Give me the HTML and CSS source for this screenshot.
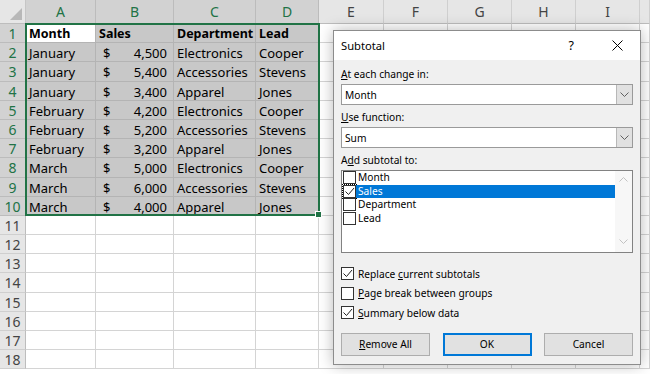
FILE: index.html
```html
<!DOCTYPE html>
<html lang="en">
<head>
    <meta charset="UTF-8">
    <title>Subtotal</title>
    <link rel="stylesheet" href="styles.css">
</head>
<body>
    <div class="sheet" id="sheet">
        <div class="sel"><span class="handle"></span></div>
    </div>

    <div class="dialog">
        <div class="dlg-title">
            <span>Subtotal</span>
            <span class="help">?</span>
            <svg class="close" width="11" height="11" viewBox="0 0 11 11"><path d="M0.5 0.5L10.5 10.5M10.5 0.5L0.5 10.5" stroke="#000" stroke-width="1"/></svg>
        </div>
        <div class="dlg-body">
            <div class="lbl"><u>A</u>t each change in:</div>
            <div class="combo">
                <span>Month</span>
                <span class="combo-btn"><svg width="9" height="5" viewBox="0 0 9 5"><path d="M0.5 0.5L4.5 4.5L8.5 0.5" fill="none" stroke="#606060"/></svg></span>
            </div>
            <div class="lbl"><u>U</u>se function:</div>
            <div class="combo">
                <span>Sum</span>
                <span class="combo-btn"><svg width="9" height="5" viewBox="0 0 9 5"><path d="M0.5 0.5L4.5 4.5L8.5 0.5" fill="none" stroke="#606060"/></svg></span>
            </div>
            <div class="lbl">A<u>d</u>d subtotal to:</div>
            <div class="listbox">
                <div class="items">
                    <div class="item"><span class="box"></span><span class="txt">Month</span></div>
                    <div class="item active"><span class="box focus"><svg width="11" height="11" viewBox="0 0 11 11"><path d="M1.5 5.5L4.5 8.5L10 2" fill="none" stroke="#222"/></svg></span><span class="txt">Sales</span></div>
                    <div class="item"><span class="box"></span><span class="txt">Department</span></div>
                    <div class="item"><span class="box"></span><span class="txt">Lead</span></div>
                </div>
                <div class="scroll">
                    <svg width="9" height="5" viewBox="0 0 9 5"><path d="M0.5 4.5L4.5 0.5L8.5 4.5" fill="none" stroke="#c2c2c2"/></svg>
                    <svg width="9" height="5" viewBox="0 0 9 5"><path d="M0.5 0.5L4.5 4.5L8.5 0.5" fill="none" stroke="#c2c2c2"/></svg>
                </div>
            </div>
            <div class="opts">
                <div class="opt"><span class="box"><svg width="11" height="11" viewBox="0 0 11 11"><path d="M1.5 5.5L4.5 8.5L10 2" fill="none" stroke="#222"/></svg></span><span>Replace <u>c</u>urrent subtotals</span></div>
                <div class="opt"><span class="box"></span><span><u>P</u>age break between groups</span></div>
                <div class="opt"><span class="box"><svg width="11" height="11" viewBox="0 0 11 11"><path d="M1.5 5.5L4.5 8.5L10 2" fill="none" stroke="#222"/></svg></span><span><u>S</u>ummary below data</span></div>
            </div>
            <div class="buttons">
                <button><u>R</u>emove All</button>
                <button class="default">OK</button>
                <button>Cancel</button>
            </div>
        </div>
    </div>

    <script>
        const sheet = document.getElementById('sheet');
        const letters = ['A', 'B', 'C', 'D', 'E', 'F', 'G', 'H', 'I', ''];
        const data = [
            ['Month', 'Sales', 'Department', 'Lead'],
            ['January', 4500, 'Electronics', 'Cooper'],
            ['January', 5400, 'Accessories', 'Stevens'],
            ['January', 3400, 'Apparel', 'Jones'],
            ['February', 4200, 'Electronics', 'Cooper'],
            ['February', 5200, 'Accessories', 'Stevens'],
            ['February', 3200, 'Apparel', 'Jones'],
            ['March', 5000, 'Electronics', 'Cooper'],
            ['March', 6000, 'Accessories', 'Stevens'],
            ['March', 4000, 'Apparel', 'Jones']
        ];

        function addCell(row, col, cls, html) {
            const el = document.createElement('div');
            el.className = cls;
            el.innerHTML = html || '';
            el.style.gridArea = (row + 1) + ' / ' + (col + 1);
            sheet.appendChild(el);
            return el;
        }

        // column headers
        addCell(0, 0, 'corner');
        letters.forEach((l, i) => {
            addCell(0, i + 1, 'colhead' + (i < 4 ? ' on' : ''), l);
        });

        // rows
        for (let r = 1; r <= 18; r++) {
            const inSel = r <= 10;
            addCell(r, 0, 'rowhead' + (inSel ? ' on' : ''), r);
            for (let c = 1; c <= 10; c++) {
                let cls = 'cell';
                let html = '';
                if (inSel && c <= 4) {
                    cls += (r === 1 && c === 1) ? ' active' : ' picked';
                    const v = data[r - 1][c - 1];
                    if (r === 1) {
                        cls += ' bold';
                        html = v;
                    } else if (c === 2) {
                        cls += ' money';
                        html = '<span>$</span><span>' + v.toLocaleString('en-US') + '</span>';
                    } else {
                        html = v;
                    }
                }
                addCell(r, c, cls, html);
            }
        }
    </script>
</body>
</html>
```

FILE: styles.css
```css
body {
    margin: 0;
    width: 650px;
    height: 374px;
    overflow: hidden;
    background: #fff;
    font-family: 'Noto Sans', sans-serif;
    position: relative;
}

/* ---- worksheet ---- */
.sheet {
    display: grid;
    grid-template-columns: 26px 70px 78px 82px 63px 65px 64px 64px 64px 64px 1fr;
    grid-template-rows: 24px repeat(18, 19.2px);
    font-size: 13px;
    color: #000;
}
.corner {
    background: #e6e6e6;
    border-right: 1px solid #c6c6c6;
    border-bottom: 1px solid #bdbdbd;
    position: relative;
}
.corner::after {
    content: '';
    position: absolute;
    right: 3px;
    bottom: 3px;
    border-left: 12px solid transparent;
    border-bottom: 12px solid #b8b8b8;
}
.colhead {
    background: #e6e6e6;
    border-right: 1px solid #cfcfcf;
    border-bottom: 1px solid #bdbdbd;
    text-align: center;
    line-height: 23px;
    font-size: 14px;
    color: #444;
}
.colhead.on {
    background: #d2d2d2;
    color: #217346;
    border-right-color: #bcbcbc;
}
.rowhead {
    background: #e6e6e6;
    border-right: 1px solid #bdbdbd;
    border-bottom: 1px solid #cfcfcf;
    text-align: center;
    font-size: 14px;
    line-height: 19px;
    color: #444;
}
.rowhead.on {
    background: #d2d2d2;
    color: #217346;
    border-bottom-color: #bcbcbc;
}
.cell {
    border-right: 1px solid #d4d4d4;
    border-bottom: 1px solid #d4d4d4;
    padding: 1px 3px 0;
    line-height: 18px;
    white-space: nowrap;
    overflow: hidden;
}
.cell.picked {
    background: #c8c8c8;
    border-color: #b4b4b4;
}
.cell.active {
    background: #fff;
    border-color: #b4b4b4;
}
.bold {
    font-weight: bold;
    font-size: 12.5px;
}
.money {
    display: flex;
    justify-content: space-between;
    padding: 1px 6px 0 7px;
}
.sel {
    grid-area: 2 / 2 / 12 / 6;
    border: 2px solid #217346;
    margin: -1px -1px 0 -1px;
    position: relative;
    pointer-events: none;
    z-index: 2;
}
.handle {
    position: absolute;
    right: -4px;
    bottom: -4px;
    width: 5px;
    height: 5px;
    background: #217346;
    border: 1px solid #fff;
}

/* ---- dialog ---- */
.dialog {
    position: absolute;
    left: 333px;
    top: 30px;
    width: 306px;
    height: 333px;
    background: #f0f0f0;
    border: 1px solid #8c8c8c;
    box-shadow: 0 0 14px rgba(0, 0, 0, 0.28);
    font-size: 10.2px;
    color: #000;
    z-index: 5;
}
.dlg-title {
    height: 29px;
    background: #fff;
    display: flex;
    align-items: center;
    padding: 0 17px 0 7px;
    font-size: 11.2px;
}
.dlg-title span:first-child {
    flex: 1;
}
.help {
    font-size: 12.5px;
    margin-right: 38px;
}
.dlg-body {
    padding: 6px 7px 0;
}
.lbl {
    line-height: 16px;
}
.combo {
    height: 19px;
    border: 1px solid #9a9a9a;
    background: #fff;
    display: flex;
    align-items: center;
    padding-left: 3px;
    margin: 2px 0 4px;
}
.combo span:first-child {
    flex: 1;
}
.combo-btn {
    width: 16px;
    height: 19px;
    background: #e1e1e1;
    border-left: 1px solid #b8b8b8;
    box-sizing: border-box;
    display: flex;
    align-items: center;
    justify-content: center;
}
.listbox {
    height: 81px;
    border: 1px solid #828282;
    background: #fff;
    display: flex;
    margin-top: 2px;
}
.items {
    flex: 1;
    padding: 0 0 0 1px;
}
.item {
    display: flex;
    align-items: center;
    height: 13.6px;
}
.item .txt {
    flex: 1;
    padding-left: 2px;
    line-height: 13px;
}
.item.active .txt {
    background: #0078d7;
    color: #fff;
}
.box {
    width: 11px;
    height: 11px;
    border: 1px solid #333;
    background: #fff;
    display: flex;
    flex: none;
}
.box.focus {
    outline: 1px dotted #000;
}
.scroll {
    width: 17px;
    background: #f7f7f7;
    display: flex;
    flex-direction: column;
    justify-content: space-between;
    align-items: center;
    padding: 6px 0 8px;
}
.opts {
    margin-top: 11px;
}
.opt {
    height: 19.5px;
    display: flex;
    align-items: center;
}
.opt .box {
    margin-right: 4px;
}
.buttons {
    display: flex;
    justify-content: space-between;
    margin-top: 10px;
}
button {
    width: 89px;
    height: 23px;
    background: #e1e1e1;
    border: 1px solid #adadad;
    font-family: inherit;
    font-size: 10.2px;
    color: #000;
    padding: 0;
}
button.default {
    border-color: #0078d7;
    box-shadow: inset 0 0 0 1px #0078d7;
}
```
